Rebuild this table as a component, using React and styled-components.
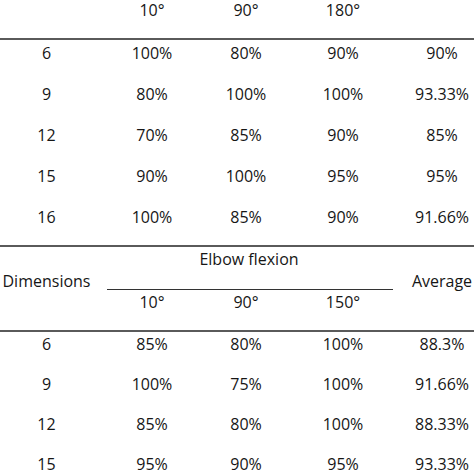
import styled, { createGlobalStyle } from "styled-components";

const GlobalStyle = createGlobalStyle`
  body {
    margin: 0;
    background: #ffffff;
    font-family: "Open Sans", "Noto Sans", sans-serif;
    color: #161616;
    overflow: hidden;
  }
`;

const COLS = "93px 118px 70px 124px 74px";

const topRows = [
  ["6", "100%", "80%", "90%", "90%"],
  ["9", "80%", "100%", "100%", "93.33%"],
  ["12", "70%", "85%", "90%", "85%"],
  ["15", "90%", "100%", "95%", "95%"],
  ["16", "100%", "85%", "90%", "91.66%"],
];

const bottomRows = [
  ["6", "85%", "80%", "100%", "88.3%"],
  ["9", "100%", "75%", "100%", "91.66%"],
  ["12", "85%", "80%", "100%", "88.33%"],
  ["15", "95%", "90%", "95%", "93.33%"],
];

const App = () => {
  return (
    <>
      <GlobalStyle />
      <Page>
        <TopHead>
          <Cell />
          <Cell>10°</Cell>
          <Cell>90°</Cell>
          <Cell>180°</Cell>
          <Cell />
        </TopHead>
        <Rule />
        {topRows.map((row) => (
          <Row key={"t" + row[0]}>
            {row.map((v, i) => (
              <Cell key={i}>{v}</Cell>
            ))}
          </Row>
        ))}
        <Rule />
        <Head>
          <SideLabel $col={1}>Dimensions</SideLabel>
          <Group>Elbow flexion</Group>
          <SubRule />
          <Degree $col={2}>10°</Degree>
          <Degree $col={3}>90°</Degree>
          <Degree $col={4}>150°</Degree>
          <SideLabel $col={5}>Average</SideLabel>
        </Head>
        <Rule />
        {bottomRows.map((row) => (
          <Row key={"b" + row[0]} $tight>
            {row.map((v, i) => (
              <Cell key={i}>{v}</Cell>
            ))}
          </Row>
        ))}
      </Page>
    </>
  );
};

export default App;

const Page = styled.div`
  width: 474px;
  height: 474px;
  overflow: hidden;
  font-size: 16px;
`;

const TopHead = styled.div`
  display: grid;
  grid-template-columns: ${COLS};
  height: 38px;
  line-height: 21px;
`;

const Row = styled.div`
  display: grid;
  grid-template-columns: ${COLS};
  height: ${(p) => (p.$tight ? "40px" : "41px")};
  line-height: ${(p) => (p.$tight ? "24px" : "26px")};
`;

const Cell = styled.div`
  text-align: center;
  white-space: nowrap;
`;

const Rule = styled.div`
  height: 2px;
  background: #5a5a5a;
`;

const Head = styled.div`
  display: grid;
  grid-template-columns: ${COLS};
  grid-template-rows: 24px 18px 1px 24px 16px;
  height: 83px;
`;

const SideLabel = styled.div`
  grid-column: ${(p) => p.$col};
  grid-row: 1 / 5;
  align-self: center;
  text-align: center;
  white-space: nowrap;
  line-height: 24px;
`;

const Group = styled.div`
  grid-column: 2 / 5;
  grid-row: 1;
  text-align: center;
  line-height: 24px;
  white-space: nowrap;
`;

const SubRule = styled.div`
  grid-column: 2 / 5;
  grid-row: 3;
  margin: 0 12px 0 14px;
  background: #333333;
`;

const Degree = styled.div`
  grid-column: ${(p) => p.$col};
  grid-row: 4;
  text-align: center;
  line-height: 24px;
  white-space: nowrap;
`;
